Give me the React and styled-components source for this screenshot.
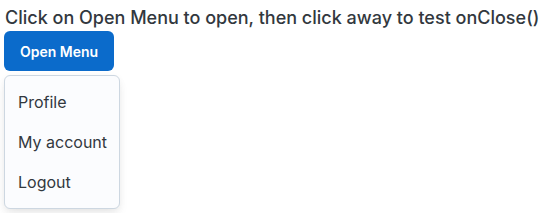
import React, { useState } from "react";
import styled, { createGlobalStyle } from "styled-components";

const GlobalStyle = createGlobalStyle`
  body {
    margin: 0;
    padding: 4px;
    font-family: Inter, "Noto Sans", sans-serif;
    background: #fff;
  }
`;

const Title = styled.div`
  font-size: 18px;
  font-weight: 500;
  line-height: 26px;
  color: #32383e;
  padding: 1px 0 0 1px;
  white-space: nowrap;
`;

const Wrap = styled.div`
  display: flex;
  flex-direction: column;
  align-items: flex-start;
  gap: 4px;
`;

const Button = styled.button`
  font-family: inherit;
  font-size: 14px;
  font-weight: 600;
  color: #fff;
  background: #0b6bcb;
  border: none;
  border-radius: 6px;
  height: 40px;
  padding: 0 16px;
  cursor: pointer;
`;

const Menu = styled.ul`
  list-style: none;
  margin: 0;
  padding: 6px 0;
  width: 116px;
  box-sizing: border-box;
  background: #fbfcfe;
  border: 1px solid #cdd7e1;
  border-radius: 6px;
  box-shadow: 0 2px 8px -2px rgba(21, 21, 21, 0.08),
    0 6px 12px -2px rgba(21, 21, 21, 0.08);
`;

const Item = styled.li`
  height: 40px;
  display: flex;
  align-items: center;
  padding: 0 13px;
  font-size: 16px;
  white-space: nowrap;
  color: #32383e;
  cursor: pointer;
`;

export default function App() {
  const [open, setOpen] = useState(true);
  return (
    <>
      <GlobalStyle />
      <Title>Click on Open Menu to open, then click away to test onClose()</Title>
      <Wrap>
        <Button onClick={() => setOpen(!open)}>Open Menu</Button>
        {open && (
          <Menu>
            {["Profile", "My account", "Logout"].map((t) => (
              <Item key={t} onClick={() => setOpen(false)}>
                {t}
              </Item>
            ))}
          </Menu>
        )}
      </Wrap>
    </>
  );
}
